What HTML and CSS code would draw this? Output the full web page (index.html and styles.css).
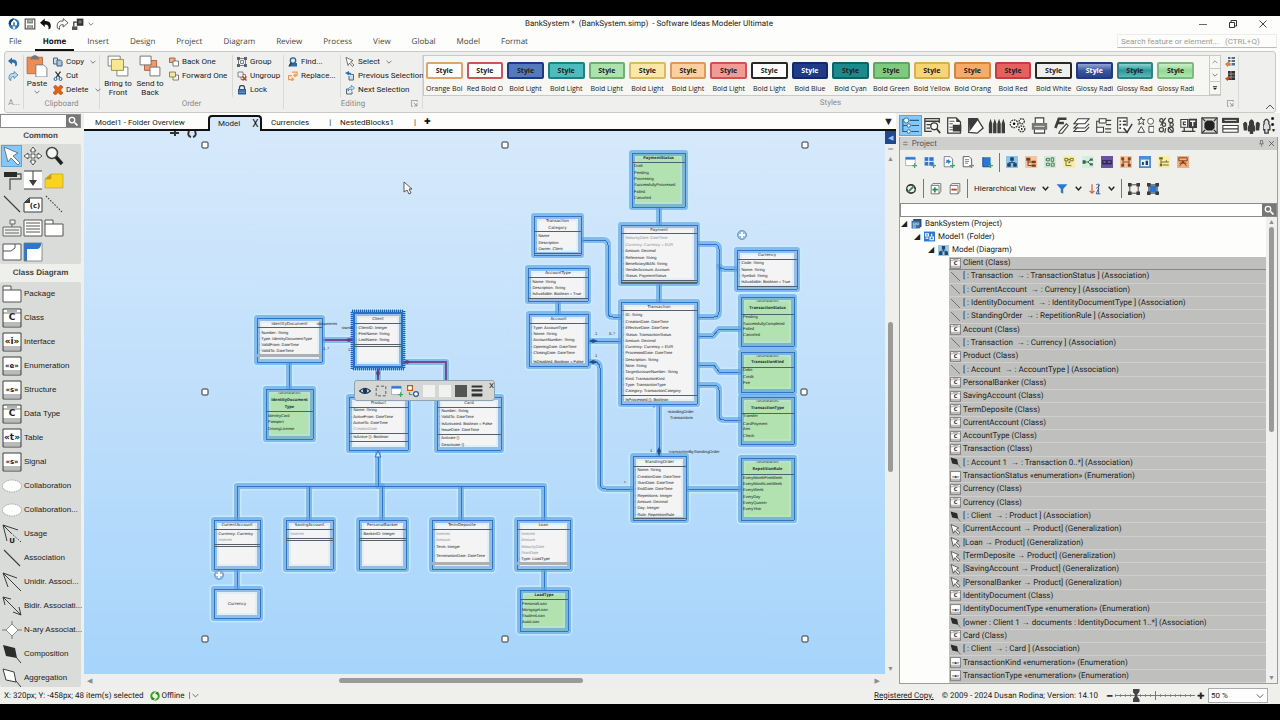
FILE: index.html
```html
<!DOCTYPE html>
<html lang="en">
<head>
<meta charset="utf-8">
<title>BankSystem * (BankSystem.simp) - Software Ideas Modeler Ultimate</title>
<link rel="stylesheet" href="styles.css">
</head>
<body>
<div class="app">
  <header class="titlebar">
    <div class="quick" id="quick"></div>
    <h1 class="title">BankSystem * &nbsp;(BankSystem.simp) &nbsp;- Software Ideas Modeler Ultimate</h1>
    <div class="window-buttons" id="windowButtons"></div>
  </header>
  <div class="menubar">
    <nav class="menu" id="menu"></nav>
    <input class="feature-search" type="text" aria-label="Search feature or element" placeholder="Search feature or element...   (CTRL+Q)">
  </div>
  <section class="ribbon" id="ribbon"></section>
  <main class="workspace">
    <aside class="palette">
      <div class="search"><input type="text" aria-label="Search tools"><button aria-label="Search" data-icon="search"></button></div>
      <h2>Common</h2>
      <div class="tool-grid" id="commonTools"></div>
      <h2 class="second">Class Diagram</h2>
      <div class="tool-list" id="classTools"></div>
    </aside>
    <section class="editor">
      <div class="doc-tabs">
        <button class="doc-tab first">Model1 - Folder Overview</button>
        <button class="doc-tab active">Model <span class="close">X</span></button>
        <button class="doc-tab">Currencies</button><span class="bar">|</span>
        <button class="doc-tab">NestedBlocks1</button><span class="bar">|</span>
        <button class="add" aria-label="New tab">✚</button>
        <button class="tab-menu" aria-label="Tab list">▼</button>
      </div>
      <div class="canvas-row">
        <div class="canvas" id="canvas"></div>
        <div class="vscroll">
          <button class="collapse" aria-label="Collapse">◀</button>
          <span class="split">═</span><span class="arrow">▲</span>
          <span class="track"><span class="thumb"></span></span>
          <span class="arrow">▼</span>
        </div>
      </div>
      <div class="hscroll"><span class="arrow">◀</span><span class="track"><span class="thumb"></span></span><span class="arrow">▶</span></div>
    </section>
    <aside class="side">
      <div class="views" id="views"></div>
      <section class="panel">
        <h2 class="panel-title"><span class="grip">≑</span>Project<span class="pin" data-icon="pin"></span><span class="pin" data-icon="close"></span></h2>
        <div class="toolbar" id="createBar"></div>
        <div class="toolbar second" id="viewBar"></div>
        <div class="search wide"><input type="text" aria-label="Search project"><button aria-label="Search" data-icon="search"></button></div>
        <div class="tree-row">
          <ul class="tree" id="tree"></ul>
          <div class="tree-scroll"><span class="arrow">▲</span><span class="track"><span class="thumb"></span></span><span class="arrow">▼</span></div>
        </div>
      </section>
    </aside>
  </main>
  <footer class="status">
    <span class="position">X: 320px; Y: -458px; 48 item(s) selected</span>
    <span class="offline"><span data-icon="sync"></span>Offline</span>
    <span class="status-more"><span data-icon="chev"></span></span>
    <a class="license" href="#">Registered Copy.</a>
    <span class="copyright">© 2009 - 2024 Dusan Rodina; Version: 14.10</span>
    <button class="zoom-step" aria-label="Zoom out">━</button>
    <input class="zoom" type="range" min="0" max="100" value="24" aria-label="Zoom">
    <button class="zoom-step" aria-label="Zoom in">✚</button>
    <label class="zoom-value"><select aria-label="Zoom level"><option>50 %</option><option>100 %</option></select><span data-icon="chev"></span></label>
  </footer>
</div>
<script src="app.js"></script>
</body>
</html>
```
FILE: styles.css
```css
* { box-sizing: border-box; margin: 0; padding: 0; }
body { background: #000; font: 8px/10px Roboto, "Open Sans", sans-serif; color: #222; text-rendering: geometricPrecision; }
button, input, select { font: inherit; color: inherit; border: 0; background: none; }
button { display: flex; align-items: center; white-space: nowrap; }
ul { list-style: none; }
svg { display: block; flex: none; }
.icon { width: 10px; height: 10px; }
.app { display: flex; flex-direction: column; height: 100vh; border: solid #000; border-width: 16px 0; background: #fdfefb; overflow: hidden; }

.titlebar { display: grid; grid-template-columns: 1fr auto 1fr; align-items: center; height: 16px; }
.quick { display: flex; align-items: center; gap: 4px; padding-left: 8px; }
.quick .icon { width: 12px; height: 12px; }
.title { font-size: 8px; font-weight: 400; padding-left: 18px; }
.window-buttons { display: flex; justify-content: flex-end; gap: 20px; padding-right: 12px; }
.menubar { display: flex; justify-content: space-between; height: 19px; }
.menu { display: flex; gap: 21px; padding-left: 9px; align-items: stretch; font-family: "Open Sans", "Noto Sans", sans-serif; }
.menu a { display: flex; align-items: center; color: #444; text-decoration: none; }
.menu a.on { font-weight: 700; color: #111; border-bottom: 2px solid #111; margin: 0 -8px; padding: 2px 8px 0; }
.feature-search { width: 160px; height: 14px; margin: 2px 3px 0 0; padding-left: 3px; border: 1px solid #ececec; border-bottom-color: #bbb; }
.feature-search::placeholder { color: #9a9a9a; opacity: 1; }

.ribbon { display: flex; height: 62px; margin: 0 4px; border: 1px solid #c9cac7; border-radius: 3px; background: #eff0ed; }
.rgroup { position: relative; display: flex; flex-direction: column; margin: 3px 0; border-right: 1px solid #d9dad7; }
.rgroup.grow { flex: 1; min-width: 0; }
.rgroup .body { display: flex; height: 42px; }
.rgroup .label { text-align: center; color: #8c8c8c; line-height: 13px; }
.rcol { display: flex; flex-direction: column; }
.rcol + .rcol.div { border-left: 1px solid #d9dad7; padding-left: 4px; }
.rcol button { height: 14px; gap: 3px; }
.rcol .chev { width: 6px; height: 6px; margin-left: 3px; }
.big { flex-direction: column; text-align: center; white-space: normal; line-height: 9px; }
.big > .icon { width: 22px; height: 22px; margin-bottom: 2px; }
.big > .icon.chev { width: 6px; height: 8px; }
.launch { position: absolute; right: 4px; bottom: 2px; }
.launch .icon { width: 7px; height: 7px; }
.g-undo { width: 19px; } .g-undo .body { justify-content: center; padding-right: 2px; }
.g-clip { width: 76px; } .g-clip .body { gap: 5px; padding-left: 2px; }
.g-order { width: 184px; } .g-order .body { padding-left: 2px; }
.g-order .big { width: 32px; } .g-order .rcol { width: 66px; padding-left: 3px; } .g-order .rcol.div { width: 50px; }
.g-edit { width: 139px; } .g-edit .rcol { width: 56px; padding-left: 4px; } .g-edit .rcol.div { width: 80px; }
.gallery { flex: 1; display: flex; min-width: 0; border: 1px solid #c9cac7; background: #f6f6f3; font-family: "Open Sans", "Noto Sans", sans-serif; font-size: 7px; }
.gallery .items { flex: 1; display: flex; min-width: 0; padding: 5px 13px 0 0; }
.gallery button.tile { flex: 1 1 0; min-width: 0; display: block; padding: 0 2px; overflow: hidden; text-align: center; }
.swatch { display: block; height: 17px; line-height: 13px; border: 2px solid; border-radius: 2px; font-weight: 700; margin-bottom: 5px; }
.caption { display: block; overflow: hidden; }
.gallery .scroller { width: 11px; display: flex; flex-direction: column; border-left: 1px solid #c9cac7; }
.gallery .scroller button { flex: 1; justify-content: center; border-bottom: 1px solid #c9cac7; }
.gallery .scroller .icon { width: 6px; height: 6px; }
.g-styles .rcol { width: 17px; padding-left: 4px; }
.ribbon-end { display: flex; align-items: flex-end; justify-content: flex-end; width: 36px; }

.workspace { flex: 1; display: flex; min-height: 0; }
.search { display: flex; height: 14px; border: 1px solid #8b8b8b; background: #fff; }
.search input { flex: 1; min-width: 0; }
.search button { width: 14px; justify-content: center; background: #777; color: #fff; }
.palette { width: 84px; padding: 1px 3px 0 0; background: #efefec; font-family: "Liberation Sans", sans-serif; font-size: 8px; display: flex; flex-direction: column; }
.palette h2 { font-size: 8px; line-height: 16px; font-weight: 700; text-align: center; color: #444; }
.palette h2.second { line-height: 18px; }
.tool-grid { display: grid; grid-template-columns: repeat(3, 21px); grid-auto-rows: 24px; padding-left: 1px; background: #dadcd9; border-radius: 2px; }
.tool-grid button { justify-content: center; }
.tool-grid button.on { background: #85c8f8; border: 1px solid #5aa6dc; margin: 1px 0; }
.tool-grid .icon, .tool-list .icon { width: 20px; height: 20px; }
.tool-list { flex: 1; min-height: 0; background: #dadcd9; border-radius: 2px; padding-left: 2px; }
.tool-list button { height: 24px; gap: 2px; }

.editor { flex: 1; min-width: 0; display: flex; flex-direction: column; background: #eeefec; }
.doc-tabs { display: flex; align-items: stretch; height: 18px; padding-top: 2px; background: #fdfefb; border-bottom: 2px solid #111; }
.doc-tab { padding: 2px 9px 0 9px; }
.doc-tab.first { width: 124px; padding-left: 11px; }
.doc-tab.active { gap: 12px; width: 54px; margin-bottom: -2px; border: 2px solid #111; border-bottom: 0; border-radius: 4px 4px 0 0; background: #d6e9fb; padding: 0 0 0 8px; }
.close { font-size: 10px; color: #111; }
.bar { padding: 3px 0 0 11px; }
.add { color: #000; padding-left: 8px; }
.tab-menu { margin-left: auto; font-size: 11px; padding-right: 2px; }
.canvas-row { flex: 1; display: flex; min-height: 0; }
.canvas { position: relative; flex: 1; min-width: 0; overflow: hidden; background: linear-gradient(#d6e9fb, #a6d4fb); }
.canvas > svg { width: 801px; height: 544px; }
.vscroll { width: 11px; display: flex; flex-direction: column; align-items: center; color: #8d8d8d; font-size: 7px; }
.collapse { width: 11px; height: 13px; background: #24478c; color: #9cc4f4; justify-content: center; }
.arrow { font-size: 7px; color: #8d8d8d; }
.track { flex: 1; display: flex; }
.thumb { background: #9a9b99; border-radius: 3px; }
.vscroll .track { flex-direction: column; }
.vscroll .thumb { width: 5px; height: 30%; margin-top: 158px; }
.hscroll { height: 13px; display: flex; align-items: center; padding: 0 16px 0 3px; }
.hscroll .track { margin: 0 10px; }
.hscroll .thumb { width: 32%; height: 5px; margin-left: 31%; }

.floating { position: absolute; left: 270px; top: 249px; width: 141px; height: 21px; display: flex; align-items: center; gap: 4px; padding-left: 4px; background: #d5d7d5; border: 1px solid #8fa3b3; border-radius: 3px; }
.floating .icon { width: 12px; height: 12px; }
.floating .x { position: absolute; right: 0; top: 0; }

.side { width: 384px; padding: 0 2px 0 3px; display: flex; flex-direction: column; background: #efefec; }
.views { display: flex; height: 24px; align-items: center; }
.views button { flex: 20 1 0; height: 21px; justify-content: center; padding: 0; }
.views button.on { background: #85c8f8; border: 1px solid #5aa6dc; }
.views .icon { width: 17px; height: 17px; }
.views button.cut { flex: 8 1 0; overflow: hidden; }
.views .more { width: 7px; font-size: 5px; line-height: 6px; color: #000; }
.panel { flex: 1; min-height: 0; display: flex; flex-direction: column; border: 1px solid #9c9c9c; border-top: 0; margin-bottom: 3px; }
.panel-title { display: flex; align-items: center; gap: 3px; height: 13px; font-size: 8px; font-weight: 400; background: #cecfcc; color: #555; padding: 0 2px; }
.grip { font-size: 8px; color: #888; }
.panel-title .pin[data-icon=pin] { margin-left: auto; }
.panel-title .icon { width: 7px; height: 7px; }
.toolbar { display: flex; align-items: center; height: 24px; padding-left: 5px; gap: 7px; }
.toolbar .icon { width: 12px; height: 12px; }
.toolbar .chev { width: 7px; height: 7px; }
.toolbar .sep { width: 1px; height: 19px; margin: 0 -1px; background: #777; }
.toolbar.second { height: 29px; }
.view-kind { display: flex; align-items: center; }
.view-kind select, .zoom-value select { appearance: none; }
.view-kind select { width: 68px; }
.wide { height: 14px; }
.tree-row { flex: 1; display: flex; min-height: 0; background: #fdfefb; }
.tree { flex: 1; min-width: 0; display: grid; grid-auto-rows: minmax(0, 1fr); }
.tree li { display: flex; align-items: center; gap: 3px; white-space: pre; }
.tree .icon { width: 11px; height: 11px; }
.tree .caret { width: 7px; font-size: 8px; }
.tree .lv0 { padding-left: 1px; } .tree .lv1 { padding-left: 14px; } .tree .lv2 { padding-left: 28px; }
.tree .lv3 { margin-left: 49px; padding-left: 1px; gap: 2px; background: #bfc0bd; border-bottom: 1px solid #cfd0cd; }
.tree .lv3.current { border-color: #888; }
.tree-scroll { width: 11px; display: flex; flex-direction: column; align-items: center; background: #f0f0ee; }
.tree-scroll .thumb { width: 5px; height: 46%; }

.status { position: relative; display: flex; align-items: center; height: 17px; padding: 0 12px 0 4px; background: #efefec; }
.offline { display: flex; align-items: center; gap: 2px; padding: 0 4px 0 6px; }
.status-more { border-left: 1px solid #888; padding-left: 2px; }
.status-more .icon { width: 7px; height: 7px; }
.license { margin-left: auto; color: inherit; }
.copyright { padding: 0 6px 0 8px; }
.zoom-step { justify-content: center; width: 11px; font-size: 9px; }
.zoom { appearance: none; width: 80px; height: 15px; background: linear-gradient(#777, #777) center / 100% 1px no-repeat, linear-gradient(#777, #777) center / 1px 9px no-repeat, repeating-linear-gradient(90deg, #999 0 1px, transparent 1px 5px) center / 100% 3px no-repeat; }
.zoom::-webkit-slider-thumb { appearance: none; width: 7px; height: 13px; background: #444; clip-path: polygon(0 0, 100% 0, 100% 20%, 60% 50%, 100% 80%, 100% 100%, 0 100%, 0 80%, 40% 50%, 0 20%); }
.zoom-value { display: flex; align-items: center; width: 60px; height: 15px; margin-left: 2px; padding-right: 3px; border: 1px solid #aaa; background: #fdfdfd; }
.zoom-value select { flex: 1; padding-left: 2px; }
.zoom-value .icon { width: 8px; height: 8px; }

.halo { fill: none; stroke: #c9ecff; stroke-width: 9; stroke-opacity: .8; stroke-linejoin: round; }
.band { fill: none; stroke: #5d9fe3; stroke-width: 6; stroke-opacity: .65; stroke-linejoin: round; }
.link { fill: none; stroke: #2f77c4; stroke-width: 1; stroke-linejoin: round; shape-rendering: crispEdges; }
.link.owner { stroke: #7b4a8e; stroke-width: 2; }
.card { fill: #f3f4f3; } .card.green { fill: #b2e2b0; }
.inner { fill: none; stroke: #c4e4fb; stroke-opacity: .7; }
.rule { stroke: #55606c; stroke-width: 1; shape-rendering: crispEdges; }
.greybar { fill: #adb0b2; }
.name { font: 4px "DejaVu Sans", sans-serif; text-anchor: middle; fill: #222a33; }
.green .name { font: 700 4px "Open Sans", sans-serif; }
.green .name.kind { font: 3px "DejaVu Sans", sans-serif; }
.attr { font: 4px "Liberation Sans", sans-serif; fill: #14181c; }
.attr.dim { fill: #8c9196; }
.mark { fill: #1c4f8c; }
.mark.owner { fill: #6b3a7c; }
.handle { fill: #fff; stroke: #333; stroke-width: 1; }
```
FILE: app.js
```javascript
const D = '#3c3c3c', B = '#2b78d0';
const S = (d, c = D, w = 1.5, f = 'none') => `<path d="${d}" fill="${f}" stroke="${c}" stroke-width="${w}"/>`;
const F = (d, c = D) => `<path d="${d}" fill="${c}"/>`;
const T = (x, y, s, t) => `<text x="${x}" y="${y}" font-size="${s}" font-weight="700" text-anchor="middle" font-family="DejaVu Sans, sans-serif" fill="#222">${t}</text>`;
const classBox = (t, s) => S('M1 1H19V19H1Z', D, 1, '#fff') + S('M1 15H19M1 17H19', D, .7) + T(10, 12, s, t);
const plus = S('M16 12V20M12 16H20', '#3aa76d', 2);
const undoPath = 'M0 8L8 1V5Q19 4 18 15Q18 18 14 19Q16 11 8 11V15Z';
const nodes = (bg, c) => F('M0 0H20V20H0Z', bg) + S('M10 7V11M5 14V11H15V14', c, 1.5) + F('M7 2H13V8H7ZM2 12H8V18H2ZM12 12H18V18H12Z', c);
const frame = S('M3 3H17V17H3Z', D, 1.5) + F('M0 0H6V6H0ZM14 0H20V6H14ZM0 14H6V20H0ZM14 14H20V20H14Z', D);

const icons = {
  logo: '<circle cx="10" cy="10" r="9" fill="#2774c2"/>' + F('M2 5Q5 0 10 1V9L6 13L1 9Z', '#123c6b') + F('M10 2L15 7V12H12V18H8V12H5V8Z', '#fff') + F('M9 7H11V14H9Z', '#123c6b'),
  save: S('M2 2H18V18H2Z', '#555', 2) + F('M5 2H15V9H5ZM5 12H15V18H5Z', '#888') + S('M7 5H13M7 15H13', '#fff', 1),
  undoK: F(undoPath, '#111'), undo: F(undoPath, '#2b6fae'),
  redoK: `<g transform="matrix(-1 0 0 1 20 0)">${S(undoPath, '#333', 1.3)}</g>`,
  redo: `<g transform="matrix(-1 0 0 1 20 0)">${S(undoPath, '#3579ad', 1.5, '#bcdcf0')}</g>`,
  shapes: F('M8 1H19V13H8Z', '#333') + F('M0 14H9V20H0Z', '#555') + S('M3 14V7H8', '#333', 2) + F('M11 4H16V9H11Z', '#777'),
  chev: S('M2 6L10 14L18 6', '#333', 2), chevUp: S('M2 14L10 6L18 14', '#555', 2),
  chevB: S('M2 5L10 14L18 5', '#222', 4),
  menuDown: F('M3 4H17V7H3ZM3 9H17L10 17Z', '#222'),
  min: S('M2 11H18', '#333', 1.5), max: S('M3 7H13V17H3ZM6 7V3H17V14H13', '#333', 2),
  close: S('M3 3L17 17M17 3L3 17', '#444', 2),
  pin: S('M6 1H14M7 1V11M13 1V11M3 11H17M10 11V19', '#666', 2),
  launch: S('M18 5V1H1V18H5', '#777', 2) + S('M8 8L16 16M17 9V17H9', '#777', 2),
  search: S('M13 13L19 19', '#fff', 3.5) + '<circle cx="8" cy="8" r="5.5" fill="none" stroke="#fff" stroke-width="2.5"/>',
  paste: F('M1 2H15V17H1Z', '#ee8b57') + S('M1 2H15V17H1Z', '#a4603c', .7) + F('M4 4Q4 1 8 0Q12 1 12 4Z', '#777') + S('M9 9H16L19 12V20H9Z', '#777', .8, '#fff'),
  copy: S('M1 2H9V14H1Z', '#4b6577', 2, '#cddbe4') + S('M8 6H15L18 9V18H8Z', '#3c5f80', 2, '#a9c4dc'),
  cut: S('M5 1L14 13M15 1L6 13', '#333', 2.5) + '<circle cx="5" cy="16" r="3" fill="none" stroke="#2463a8" stroke-width="2"/><circle cx="15" cy="16" r="3" fill="none" stroke="#2463a8" stroke-width="2"/>',
  del: F('M1 4L5 0L10 5L15 0L20 4L15 10L20 16L15 20L10 15L5 20L0 16L5 10Z', '#e36216') + S('M1 4L5 0L10 5L15 0L20 4L15 10L20 16L15 20L10 15L5 20L0 16L5 10Z', '#9b3b08', 1),
  front: S('M1 1H12V10H1Z', '#777', .8, '#fff') + S('M9 11H19V19H9Z', '#777', .8, '#fff') + S('M4 4H15V14H4Z', '#8b8b46', .8, '#f6e88f'),
  back: S('M5 5H16V14H5Z', '#a4603c', .8, '#ee9a6b') + S('M1 1H11V9H1Z', '#666', .8, '#fff') + S('M10 11H19V19H10Z', '#666', .8, '#fff'),
  backOne: S('M1 2H12V11H1Z', '#7c4c32', 1.5, '#f4b18b') + S('M8 8H19V18H8Z', '#555', 1.5, '#fff'),
  forwardOne: S('M8 8H19V18H8Z', '#555', 1.5, '#fff') + S('M1 2H13V12H1Z', '#666', 1.5, '#f6e88f'),
  group: S('M3 3H17V17H3Z', '#556', 1.5) + F('M0 0H6V6H0ZM14 0H20V6H14ZM0 14H6V20H0ZM14 14H20V20H14Z', '#567') + S('M7 7H13V13H7Z', '#567', 1.5),
  ungroup: S('M2 2H12V12H2ZM8 12V17H17V7H12', '#666', 1.5) + S('M11 11L19 19M19 11L11 19', '#d0401b', 3),
  lock: S('M5 9V5Q5 1 10 1Q15 1 15 5V9', '#345', 2.5) + F('M2 8H18V19H2Z', '#2c5f98') + S('M4 12H16M4 15H16', '#9fc3e4', 1),
  find: F('M4 12H18V19H4Z', '#2d6aa8') + '<circle cx="10" cy="7" r="5.5" fill="#d6ebfa" stroke="#2d5f92" stroke-width="2.5"/>' + S('M6 12L2 19', '#333', 3),
  replace: S('M8 2H18V9H12M15 5L12 9L15 12', '#ee9a55', 2.5) + S('M8 9H1V17H10M7 13L11 17L7 20', '#ee9a55', 2.5),
  arrow: S('M2 1L6 17L9 12L15 19L18 16L11 10L16 7Z', '#333', 1.3, '#fff'),
  prevSel: F('M0 4L8 0V3Q14 3 14 10Q10 6 8 7V9Z', '#2b6fae') + S('M8 10V18H17V7H13', '#567', 2, '#cddbe4'),
  nextSel: S('M8 8H3V18H14V13', '#567', 2, '#e4eaee') + S('M6 12Q7 3 13 4V1L19 6L13 11V8Q9 8 6 12', '#2b6fae', 1.3, '#cde4f5'),
  styleA: F('M6 0H20V4H6ZM6 6H20V10H6ZM6 12H20V17H6Z', '#556e88') + S('M12 0V17', '#fff', 2) + F('M0 14L8 8L10 14L5 20Z', '#e0813c'),
  styleB: F('M6 0H20V18H6Z', '#333') + S('M12 0V17M6 6H20M6 12H20', '#bbb', 1.3) + F('M0 15L8 10L10 14L5 20Z', '#c74e22'),
  sync: '<circle cx="10" cy="10" r="7.5" fill="none" stroke="#35a51c" stroke-width="4"/>' + S('M8 5L13 1M12 15L7 19', '#fff', 2) + F('M10 4L17 2L16 9ZM10 16L3 18L4 11Z', '#2b8a18'),
  pointer: S('M2 1L6 16L9 12L16 19L18 17L11 10L16 7Z', '#777', 1, '#fff'),
  move: S('M10 1L13 5H11V9H15V7L19 10L15 13V11H11V15H13L10 19L7 15H9V11H5V13L1 10L5 7V9H9V5H7Z', '#555', 1, '#fff'),
  zoomTool: '<circle cx="8" cy="7" r="5.5" fill="#f5f5f5" stroke="#444" stroke-width="1.5"/>' + S('M12 11L18 18', '#222', 3.5),
  roller: F('M2 2H15V7H2Z', '#2a2a2a') + S('M15 4H19V9H8V20', '#555', 1.3),
  insert: F('M1 1H19V19H1Z', '#fff') + S('M1 1H19M1 19H19M10 1V12', D, 1) + F('M6 10H14L10 16Z'),
  note: F('M7 4H19V18H1V9Z', '#fbd31c') + F('M1 9L7 4V9Z', '#c79a10') + S('M7 4H19V18H1V9ZM7 4V9H1', '#b9982a', .6),
  line: S('M2 2L18 18', D, 1.1), dash: S('M2 2L18 18', D, 1.1).replace('/>', ' stroke-dasharray="1.5 1.5"/>'),
  comment: S('M6 4H19V18H1V9Z', D, 1, '#fff') + F('M1 9L7 4V9Z') + T(12, 14, 7, '(c)'),
  stamp: S('M8 2H13V6H8ZM10 6V9M1 9H19V18H1ZM3 12H17M3 15H17', '#666', 1, '#eee'),
  list: S('M1 2H19V18H1Z', '#555', 1, '#fff') + S('M3 5H17M3 8H17M3 11H17M3 14H17', '#555', 1),
  pack: S('M1 6H19V18H1ZM1 6V2H9V6', '#555', 1, '#fff'),
  pageA: S('M1 2H19V18H1Z', '#555', 1, '#fff') + S('M1 9H9L13 6V2', '#555', 1),
  frameT: F('M1 1H19V19H1Z', '#fff') + F('M1 1H18V3Q17 7 14 7H4V19H1Z', B) + S('M1 1H19V19H1Z', '#777', .8),
  cls: classBox('C', 9) + S('M1 5H19', D, .7) + S('M5 3H15', '#999', 1.5), iface: classBox('«i»', 9), enumr: classBox('«e»', 7), struct: classBox('«s»', 7), tabl: classBox('«t»', 9),
  ellipse: '<ellipse cx="10" cy="10" rx="9.5" ry="6" fill="#fff" stroke="#999" stroke-width=".8" stroke-dasharray="1.5 .8"/>',
  usage: S('M1 1L5 17M1 1L16 6M1 1L9 9', D, 1) + S('M9 9L19 18', D, 1).replace('/>', ' stroke-dasharray="1.5 1.5"/>') + T(10, 19, 7, 'U'),
  uni: S('M1 1L19 19M1 1L6 15M1 1L15 6', D, 1), bidi: S('M1 1L19 19M1 1L3 9M1 1L9 3M19 19L17 11M19 19L11 16', D, 1),
  nary: S('M0 10H20M10 1V19', '#777', 1) + S('M10 4L16 10L10 16L4 10Z', '#777', .8, '#fff'),
  comp: F('M1 1L13 4L15 14L4 12Z', '#2c2c2c') + S('M14 13L19 19', D, 1), aggr: S('M1 1L12 4L14 14L4 12Z', D, 1, '#fff') + S('M14 13L19 19', D, 1),
  vTree: S('M4 3H1V17H6M1 10H6M9 4H20M11 10H20M11 17H20', '#275f86', 1.3) + '<circle cx="5" cy="4" r="3" fill="#e6f5ff" stroke="#275f86"/><circle cx="8" cy="10" r="2" fill="#fff" stroke="#275f86"/><circle cx="8" cy="17" r="2" fill="#fff" stroke="#275f86"/>',
  vFind: S('M18 7V2H1V17H9M1 5H18M3 9H8M3 13H7', D, 1.5) + '<circle cx="12" cy="11" r="4" fill="#fff" stroke="#3c3c3c" stroke-width="1.5"/>' + S('M15 14L19 19', D, 2),
  vDoc: S('M2 1H12L17 6V19H2Z', D, 1.5, '#fff') + F('M12 1V6H17ZM8 9H18V17H8Z') + S('M4 5H10M4 8H8M4 12H8M4 15H8', D, 1),
  vPaint: S('M2 2H12L19 13L12 19L2 18Z', D, 1.5, '#fff') + F('M2 2H14L3 17Z'),
  vPencils: F('M1 8L3 2L5 8V19H1ZM6 8L8 2L10 8V19H6ZM11 8L13 2L15 8V19H11ZM16 8L18 2L20 8V19H16Z'),
  vGears: '<g fill="#fff" stroke="#444" stroke-width="1.7" stroke-dasharray="2 .9"><circle cx="6" cy="8" r="4.5"/><circle cx="15" cy="5" r="3"/><circle cx="15" cy="14" r="3.5"/></g><circle cx="6" cy="8" r="1.5"/><circle cx="15" cy="14" r="1"/>',
  vPrint: S('M5 8V1H15V8M4 13V19H16V13', D, 1.3, '#fff') + F('M1 7H19V15H1Z', '#777') + S('M4 11H16M6 16H14', '#eee', 1),
  vFont: S('M4 13L8 2H17M6 7H14', D, 3) + S('M9 17L17 8L19 10L12 19L8 19Z', D, 1.2, '#fff'),
  vLayers: S('M6 12L1 17H14L19 12M6 8L1 13H14L19 8M6 2H19L14 8H1Z', D, 1.3, '#fff'),
  vFlow: S('M5 2H13V7H5ZM2 12H10V18H2ZM13 4H19M13 9H19M12 14H19M12 18H19M2 12V5H5', D, 1.3, '#fff'),
  vCheck: S('M2 1H13V18H2Z', D, 1.3, '#fff') + S('M4 5H6M8 5H12M4 9H6M8 9H12M4 13H6', D, 2) + S('M9 13L13 18L19 8', D, 1.8, '#fff'),
  vShapes: S('M5 0L6 3H9L7 5L8 9L5 7L2 9L3 5L1 3H4ZM14 11H20V18H14ZM5 11L9 18H1Z', D, 1.1, '#fff') + '<circle cx="16" cy="5" r="3.5" fill="#fff" stroke="#444"/>',
  vPct: '<g fill="none" stroke="#444" stroke-width="1.5"><circle cx="4" cy="4" r="2"/><circle cx="15" cy="4" r="2.5"/><circle cx="7" cy="9" r="2"/><circle cx="16" cy="9" r="2"/><circle cx="4" cy="15" r="2.5"/><circle cx="15" cy="15" r="3"/></g>' + S('M9 1L3 10M9 13L8 19M12 12L18 18', D, 1.3),
  vCT: S('M1 3H9V12H1Z', D, 1.3, '#fff') + F('M10 2H20V13H10Z') + S('M12 5H18M15 5V11', '#fff', 1.5) + S('M7 6H4V9H7', D, 1.5) + S('M2 17H18M5 12V17M15 12V17', D, 1.5),
  vChip: S('M1 1H19V19H1Z', D, 1.3, '#ddd') + S('M1 1L5 5M19 1L15 5M1 19L5 15M19 19L15 15', D, 1.5) + F('M7 4H13L16 7V13L13 16H7L4 13V7Z', '#222'),
  vRows: F('M0 1H20V7H0Z') + S('M1 10H19V18H1ZM1 14H19', D, 1.3, '#fff') + S('M3 4H17', '#fff', 1),
  people: F('M7 6Q10 -1 13 6V9Q15 11 14 17H12V20H8V17H6Q5 11 7 9ZM0 8Q3 3 5 8V16H1ZM20 8Q17 3 15 8V16H19Z'),
  person: S('M7 6Q10 -1 13 6Q12 8 14 10V15H12V19H8V15H6V10Q8 8 7 6Z', D, 1.5, '#ddd'),
  newDiag: S('M1 2H17V16H1Z', '#888', 1, '#fff') + F('M1 2H17V6H1Z', B) + plus,
  newFold: F('M1 2H16V16H1Z', B) + S('M1 9H16M8 2V16', '#fff', 1.5) + plus,
  newStar: S('M2 1H12L16 5V18H2Z', '#667', 1.3, '#fff') + F('M9 5L11 8L14 9L11 11L10 14L8 11L4 12L6 9L5 6L8 7Z', B) + plus,
  newDoc: S('M2 1H12L16 5V18H2Z', '#556', 1.5, '#fff') + S('M5 6H12M5 9H12M5 12H10', '#667', 1.3) + plus,
  newBook: F('M3 2H16V18H3Z', B) + S('M3 2V18H15', '#15477f', 1.5) + plus,
  refresh: '<circle cx="10" cy="10" r="7" fill="none" stroke="#333" stroke-width="3"/>' + S('M5 15L15 5', '#3a8d52', 3) + S('M3 10L7 5M17 10L13 15', '#fff', 1),
  expand: S('M2 4H15V18H2ZM2 4L5 1H18V14L15 18', '#555', 1.3, '#fff') + S('M8 7V16M4 11H13', '#2e8d4e', 3),
  collapse: S('M2 4H15V18H2ZM2 4L5 1H18V14L15 18', '#555', 1.3, '#fff') + S('M4 11H13', '#bb3d22', 3),
  filter: F('M1 2H19L12 10V18L8 16V10Z', B), sort: S('M5 2V17M1 13L5 17L9 13', '#d3622c', 2) + S('M12 18L16 9M16 3V18M12 3Q18 0 17 5L12 9M12 18H19', '#37598a', 1.6),
  selA: frame, selB: F('M4 4H16V16H4Z', B) + frame,
  project: F('M4 2H19V15L16 18H4Z', '#2c4f73') + F('M1 5H16V19H1Z', '#3a6da0') + S('M4 9H8V12H4ZM10 9H14V12H10ZM4 14H8V17H4Z', '#c3defa', 1.3),
  folder: F('M0 1H20V19H0Z', B) + S('M3 5H8V9H3ZM11 11H17V16H11ZM3 13H8M14 5V9', '#fff', 2),
  diagram: nodes('#9dc8e8', '#1f4767'),
  eye: S('M1 10Q10 1 19 10Q10 18 1 10Z', '#16365a', 2, '#fff') + '<circle cx="10" cy="10" r="4" fill="#16365a"/>',
  marquee: S('M2 2H18V18H2Z', '#555', 1.5).replace('/>', ' stroke-dasharray="5 3"/>'),
  reshape: S('M1 1H9V9H1Z', '#b85b1d', 2, '#fff') + S('M4 12V16H9', '#2b8a58', 1.5) + '<circle cx="15" cy="15" r="4" fill="#fff" stroke="#205c9c" stroke-width="2"/>',
  white: F('M0 0H20V20H0Z', '#f0f1f0'), dark: F('M0 0H20V20H0Z', '#555'), lines: F('M1 1H19V4H1ZM1 7H19V11H1ZM1 14H19V19H1Z', '#333')
};
const tint = (bg, c, fill, line) => F('M0 0H20V20H0Z', bg) + S(line, c, 1.6) + F(fill, c);
icons.k0 = nodes('#8ec3ea', '#1b4465');
icons.k1 = tint('#f2c6a0', '#7c3a16', 'M2 3H9V8H2ZM11 8H18V12H11ZM11 14H18V18H11Z', 'M5 8V16H11M5 10H11');
icons.k2 = tint('#cfead7', '#487a59', 'M3 5H5V7H3Z', 'M4 4H9V8H4ZM4 12H9V16H4ZM12 3H16V9H12ZM12 12H17V17H12Z');
icons.k3 = tint('#f6edaa', '#77702c', 'M9 9H12V12H9Z', 'M3 4H8V8H3ZM12 4H17V8H12ZM5 8V16H14M8 6H12');
icons.k4 = tint('#d2efdf', '#39654f', 'M1 7H6V13H1ZM13 4H18V8H13ZM13 12H18V16H13Z', 'M5 10H10L14 6M10 10L14 14');
icons.k5 = F('M0 0H20V20H0Z', '#6a54a0') + F('M2 7H18V14H2Z', '#2f2254') + S('M4 10H8M11 10H16', '#a597cb', 2);
icons.k6 = tint('#f1c4a1', '#8a451c', 'M2 2H7V7H2ZM13 2H18V7H13ZM2 13H7V18H2ZM13 13H18V18H13Z', 'M5 6V14M15 6V14M5 10H15');
icons.k7 = F('M0 0H20V20H0Z', '#4b8fd2') + F('M3 6H17V17H3Z', '#e6f0f8') + F('M5 10H8V15H5ZM11 8H15V15H11Z', '#1c3f6c');
icons.k8 = tint('#f7eda5', '#73692f', 'M2 2H8V6H2ZM3 13H7V17H3Z', 'M5 6V14M5 10H18M14 7V10M8 15H18');
icons.k9 = tint('#edb083', '#8d3d18', 'M8 8H12V12H8Z', 'M3 3H17V8H3ZM4 17L10 9L16 17M4 12H16');

const icon = (n, c = '') => `<svg class="icon ${c}" viewBox="0 0 20 20" aria-hidden="true">${icons[n]}</svg>`;
const byId = id => document.getElementById(id);
document.querySelectorAll('[data-icon]').forEach(e => e.innerHTML = icon(e.dataset.icon));
const btn = (n, t = '', more = '') => `<button${t ? '' : ` aria-label="${n}"`}>${n ? icon(n) : ''}${t}${more}</button>`;
const drop = icon('chev', 'chev');

byId('quick').innerHTML = btn('logo') + btn('save') + btn('undoK') + btn('redoK') + btn('shapes') + drop.replace('icon chev', 'chev" width="6');
byId('windowButtons').innerHTML = ['min', 'max', 'close'].map(n => btn(n)).join('');
byId('menu').innerHTML = 'File Home Insert Design Project Diagram Review Process View Global Model Format'.split(' ').map(t => `<a href="#"${t === 'Home' ? ' class="on"' : ''}>${t}</a>`).join('');

const group = (cls, label, body, launch) => `<div class="rgroup ${cls}"><div class="body">${body}</div><div class="label">${label}</div>${launch ? `<button class="launch" aria-label="More">${icon('launch')}</button>` : ''}</div>`;
const col = (html, cls = '') => `<div class="rcol ${cls}">${html}</div>`;
const big = (n, t, m = '') => `<button class="big">${icon(n)}${t}${m}</button>`;
const tiles = [['Orange Bol', '#fff', '#dca56c'], ['Red Bold O', '#fff', '#cc5555'], ['Bold Light', '#5479bd', '#1c3982'], ['Bold Light', '#4dbcbe', '#207f82'], ['Bold Light', '#ace2ad', '#6cb26e'], ['Bold Light', '#fbe7a7', '#d9bb66'], ['Bold Light', '#fbcf9f', '#dc9b5e'], ['Bold Light', '#f49a95', '#d05353'], ['Bold Light', '#fff', '#282828'], ['Bold Blue', '#203b88', '#12296c', 1], ['Bold Cyan', '#198b8d', '#0e6366'], ['Bold Green', '#7ecb7e', '#5da85e'], ['Bold Yellow', '#f8d475', '#d6b051'], ['Bold Orang', '#f6ac68', '#d28642'], ['Bold Red', '#e95f5d', '#c13f42'], ['Bold White', '#efefee', '#282828'], ['Glossy Radi', 'linear-gradient(#93a6d4,#3b56a2 50%,#29438f)', '#20397f', 1], ['Glossy Radi', 'linear-gradient(#8bd2d1,#27999a 50%,#5bbab9)', '#318083'], ['Glossy Radi', 'linear-gradient(#c8efc7,#93d894 50%,#aee7ad)', '#7fba80']];
byId('ribbon').innerHTML =
  group('g-undo', 'A...', col(btn('undo') + btn('redo'))) +
  group('g-clip', 'Clipboard', big('paste', 'Paste', drop) + col(btn('copy', 'Copy', drop) + btn('cut', 'Cut') + btn('del', 'Delete', drop))) +
  group('g-order', 'Order', big('front', 'Bring to Front') + big('back', 'Send to Back') + col(btn('backOne', 'Back One') + btn('forwardOne', 'Forward One')) + col(btn('group', 'Group') + btn('ungroup', 'Ungroup') + btn('lock', 'Lock'), 'div')) +
  group('g-edit', 'Editing', col(btn('find', 'Find...') + btn('replace', 'Replace...')) + col(btn('arrow', 'Select', drop) + btn('prevSel', 'Previous Selection') + btn('nextSel', 'Next Selection'), 'div'), 1) +
  group('g-styles grow', 'Styles', `<div class="gallery"><div class="items">${tiles.map(([t, bg, b, w]) => `<button class="tile"><span class="swatch" style="background:${bg};border-color:${b};color:${w ? '#fff' : '#222'}">Style</span><span class="caption">${t}</span></button>`).join('')}</div><div class="scroller">${btn('chevUp') + btn('chev') + btn('menuDown')}</div></div>` + col(btn('styleA') + btn('styleB')), 1) +
  `<div class="ribbon-end">${btn('chevUp')}</div>`;

byId('commonTools').innerHTML = 'pointer move zoomTool roller insert note line comment dash stamp list pack pageA frameT'.split(' ').map((n, i) => i ? btn(n) : btn(n).replace('<button', '<button class="on"')).join('');
byId('classTools').innerHTML = [['pack', 'Package'], ['cls', 'Class'], ['iface', 'Interface'], ['enumr', 'Enumeration'], ['struct', 'Structure'], ['cls', 'Data Type'], ['tabl', 'Table'], ['struct', 'Signal'], ['ellipse', 'Collaboration'], ['ellipse', 'Collaboration...'], ['usage', 'Usage'], ['line', 'Association'], ['uni', 'Unidir. Associ...'], ['bidi', 'Bidir. Associati...'], ['nary', 'N-ary Associat...'], ['comp', 'Composition'], ['aggr', 'Aggregation']].map(a => btn(...a)).join('');

byId('views').innerHTML = 'vTree vFind vDoc vPaint vPencils vGears vPrint vFont vLayers vFlow vCheck vShapes vPct vCT vChip vRows people person'.split(' ').map((n, i) => btn(n).replace('<button', `<button class="${i === 0 ? 'on' : i === 17 ? 'cut' : ''}"`)).join('') + '<span class="more">■<br>■<br>▼</span>';
const sep = '<span class="sep"></span>', dropB = icon('chevB', 'chev');
byId('createBar').innerHTML = ['newDiag', 'newFold', 'newStar', 'newDoc', 'newBook'].map(n => btn(n)).join('') + sep + [...Array(10).keys()].map(i => btn('k' + i)).join('');
byId('viewBar').innerHTML = btn('refresh') + sep + btn('expand') + btn('collapse') + sep + `<label class="view-kind"><select aria-label="View"><option>Hierarchical View</option></select>${dropB}</label>` + btn('filter') + dropB + btn('sort') + dropB + sep + btn('selA') + btn('selB');

const rows = [['cls', 'Client (Class)'], ['line', '[ : Transaction  → : TransactionStatus ] (Association)'], ['line', '[ : CurrentAccount  → : Currency ] (Association)'], ['line', '[ : IdentityDocument  → : IdentityDocumentType ] (Association)'], ['line', '[ : StandingOrder  → : RepetitionRule ] (Association)'], ['cls', 'Account (Class)'], ['line', '[ : Transaction  → : Currency ] (Association)'], ['cls', 'Product (Class)'], ['line', '[ : Account  → : AccountType ] (Association)'], ['cls', 'PersonalBanker (Class)'], ['cls', 'SavingAccount (Class)'], ['cls', 'TermDeposite (Class)'], ['cls', 'CurrentAccount (Class)'], ['cls', 'AccountType (Class)'], ['cls', 'Transaction (Class)'], ['comp', '[ : Account 1  → : Transaction 0..*] (Association)'], ['enumr', 'TransactionStatus «enumeration» (Enumeration)'], ['cls', 'Currency (Class)'], ['cls', 'Currency (Class)'], ['comp', '[ : Client  → : Product ] (Association)'], ['arrow', '[CurrentAccount → Product] (Generalization)'], ['arrow', '[Loan → Product] (Generalization)'], ['arrow', '[TermDeposite → Product] (Generalization)'], ['arrow', '[SavingAccount → Product] (Generalization)'], ['arrow', '[PersonalBanker → Product] (Generalization)'], ['cls', 'IdentityDocument (Class)'], ['enumr', 'IdentityDocumentType «enumeration» (Enumeration)'], ['comp', '[owner : Client 1 → documents : IdentityDocument 1..*] (Association)'], ['cls', 'Card (Class)'], ['comp', '[ : Client  → : Card ] (Association)'], ['enumr', 'TransactionKind «enumeration» (Enumeration)'], ['enumr', 'TransactionType «enumeration» (Enumeration)']];
byId('tree').innerHTML = [['project', 'BankSystem (Project)'], ['folder', 'Model1 (Folder)'], ['diagram', 'Model (Diagram)']].map(([n, t], i) => `<li class="lv${i}"><span class="caret">◢</span>${icon(n)}${t}</li>`).join('') + rows.map(([n, t], i) => `<li class="lv3${i ? '' : ' current'}">${icon(n)}${t}</li>`).join('');

/* Class diagram: boxes are [x, y, right, bottom, title lines, title y, divider y, attributes [text, y, dim], rule ys, options] */
const boxes = [
  [257, 318, 322, 362, ['IdentityDocument'], 325, 327, [['Number: String', 334], ['Type: IdentityDocumentType', 340], ['ValidFrom: DateTime', 346], ['ValidTo: DateTime', 352]], [], { grey: 354 }],
  [266, 389, 313, 439, ['IdentityDocument', 'Type'], 401, 411, [['IdentityCard', 417], ['Passport', 423], ['DrivingLicense', 430]], [], { green: 1, e: 394 }],
  [354, 313, 402, 367, ['Client'], 320, 323, [['ClientID: Integer', 329], ['FirstName: String', 335], ['LastName: String', 341]], [344, 346], { main: 1 }],
  [349, 397, 408, 450, ['Product'], 404, 407, [['Name: String', 411], ['ActiveFrom: DateTime', 418], ['ActiveTo: DateTime', 424], ['CreationDate', 430, 1], ['IsActive (): Boolean', 438]], [433, 441], {}],
  [437, 397, 501, 450, ['Card'], 404, 407, [['Number: String', 412], ['ValidTo: DateTime', 418], ['IsActivated: Boolean = False', 425], ['IssueDate: DateTime', 431], ['Activate ()', 439], ['Deactivate ()', 446]], [434], {}],
  [214, 520, 260, 569, ['CurrentAccount'], 526, 529, [['Currency: Currency', 535], ['Interest', 541, 1]], [544, 546], {}],
  [286, 520, 333, 569, ['SavingAccount'], 526, 529, [['Interest', 535, 1]], [538, 540], {}],
  [359, 520, 406, 569, ['PersonalBanker'], 526, 529, [['BankerID: Integer', 535]], [538, 540], {}],
  [432, 520, 492, 569, ['TermDeposite'], 526, 529, [['Interest', 535, 1], ['Amount', 541, 1], ['Term: Integer', 548], ['TerminationDate: DateTime', 557]], [], { grey: 562 }],
  [517, 520, 570, 569, ['Loan'], 526, 529, [['Interest', 535, 1], ['Amount', 541, 1], ['MaturityDate', 548, 1], ['StartDate', 554, 1], ['Type: LoadType', 560]], [], { grey: 562 }],
  [214, 589, 260, 618, ['Currency'], 605, 0, [], [], {}],
  [520, 590, 568, 631, ['LoadType'], 596, 599, [['PersonalLoan', 605], ['MortgageLoan', 611], ['StudentLoan', 617], ['AutoLoan', 623]], [], { green: 1 }],
  [632, 153, 685, 207, ['PaymentStatus'], 159, 162, [['Draft', 167], ['Pending', 174], ['Processing', 180], ['SuccessfullyProcessed', 186], ['Failed', 193], ['Canceled', 199]], [], { green: 1 }],
  [534, 216, 581, 255, ['Transaction', 'Category'], 222, 231, [['Name', 237], ['Description', 244], ['Owner: Client', 250]], [253], {}],
  [621, 225, 697, 283, ['Payment'], 231, 233, [['MaturityDate: DateTime', 239, 1], ['Currency: Currency = EUR', 246, 1], ['Amount: Decimal', 252], ['Reference: String', 259], ['BeneficiaryIBAN: String', 265], ['SenderAccount: Account', 271], ['Status: PaymentStatus', 277]], [280, 282], {}],
  [737, 250, 797, 289, ['Currency'], 256, 259, [['Code: String', 264], ['Name: String', 271], ['Symbol: String', 277], ['IsAvailable: Boolean = True', 283]], [286], {}],
  [528, 268, 588, 301, ['AccountType'], 274, 277, [['Name: String', 283], ['Description: String', 289], ['IsAvailable: Boolean = True', 295]], [298], {}],
  [741, 297, 794, 346, ['TransactionStatus'], 309, 314, [['Pending', 318], ['SuccessfullyCompleted', 325], ['Failed', 330], ['Canceled', 336]], [], { green: 1, e: 302 }],
  [529, 314, 588, 366, ['Account'], 320, 323, [['Type: AccountType', 329], ['Name: String', 335], ['AccountNumber: String', 341], ['OpeningDate: DateTime', 348], ['ClosingDate: DateTime', 354], ['IsDisabled: Boolean = False', 363]], [], {}],
  [621, 302, 697, 404, ['Transaction'], 308, 310, [['ID: String', 316], ['CreationDate: DateTime', 323], ['EffectiveDate: DateTime', 329], ['Status: TransactionStatus', 336], ['Amount: Decimal', 342], ['Currency: Currency = EUR', 348], ['ProcessedDate: DateTime', 354], ['Description: String', 361], ['Note: String', 367], ['TargetAccountNumber: String', 373], ['Kind: TransactionKind', 380], ['Type: TransactionType', 386], ['Category: TransactionCategory', 392], ['IsProcessed (): Boolean', 401]], [395], {}],
  [633, 456, 686, 520, ['StandingOrder'], 463, 466, [['Name: String', 471], ['CreationDate: DateTime', 478], ['StartDate: DateTime', 484], ['EndDate: DateTime', 490], ['Repetitions: Integer', 497], ['Amount: Decimal', 503], ['Day: Integer', 509], ['Rule: RepetitionRule', 516]], [518], {}],
  [741, 352, 794, 392, ['TransactionKind'], 363, 367, [['Debit', 371], ['Credit', 378], ['Fee', 384]], [], { green: 1, e: 357 }],
  [741, 397, 794, 444, ['TransactionType'], 409, 413, [['Transfer', 417], ['CardPayment', 425], ['Atm', 430], ['Check', 437]], [], { green: 1, e: 402 }],
  [741, 458, 794, 520, ['RepetitionRule'], 470, 474, [['EveryMonthFirstWeek', 479], ['EveryMonthLastWeek', 485], ['EveryWeek', 491], ['EveryDay', 498], ['EveryQuarter', 504], ['EveryYear', 510]], [], { green: 1, e: 463 }]
];
const links = ['M289 363V389', 'M378 451V486H382V520', 'M237 520V486H544V520', 'M309 486V520', 'M461 486V520', 'M237 570V589', 'M544 570V590', 'M659 207V225', 'M659 284V302', 'M659 404V456', 'M582 240H603Q608 240 608 245V312Q608 317 613 317H621', 'M697 244H714Q719 244 719 249V264Q719 269 724 269H737', 'M697 317H714Q719 317 719 312V264', 'M697 336H713L719 329H741', 'M697 365H714L719 372H741', 'M697 385H714Q719 385 719 390V415Q719 420 724 420H741', 'M588 341H621', 'M588 362H594Q600 362 600 368V484Q600 489 606 489H633', 'M687 489H741', 'M558 301V314'];
const owned = ['M323 340H354', 'M378 367V397', 'M402 362H446V397'];
const notes = [[316, 325, '-documents'], [341, 329, '-owner'], [323, 350, '1..*'], [348, 351, '1'], [595, 335, '1'], [609, 335, '0..*'], [595, 357, '1'], [667, 413, '-standingOrder'], [670, 419, 'Transactions'], [650, 452, '1'], [653, 409, '*'], [668, 453, '-transactionByStandingOrder'], [624, 484, '*']];
const path = (d, c) => `<path class="${c}" d="${d}"/>`;
const all = [...links, ...owned];
const rect = b => `M${b[0]} ${b[1]}H${b[2]}V${b[3]}H${b[0]}Z`;
let art = all.map(d => path(d, 'halo')).join('') + boxes.map(b => path(rect(b), 'halo')).join('') + all.map(d => path(d, 'band')).join('') + links.map(d => path(d, 'link')).join('') + owned.map(d => path(d, 'link owner')).join('');
for (const b of boxes) {
  const [x, y, r, bt, names, ty, dv, attrs, rules, o] = b, cx = (x + r) / 2;
  art += `<g class="${o.green ? 'green' : ''}">` + path(rect(b), 'card' + (o.green ? ' green' : '')) + path(`M${x + 4} ${y + 4}H${r - 4}V${bt - 4}H${x + 4}Z`, 'inner') + path(rect(b), 'band') + path(rect(b), 'link');
  if (o.main) art += `<path d="M${x - 2} ${y - 2}H${r + 2}V${bt + 2}H${x - 2}Z" fill="none" stroke="#1d62bd" stroke-width="3" stroke-dasharray="1 1"/>` + `<path d="${rect(b)}" fill="none" stroke="#2a70c9" stroke-width="2"/>`;
  if (o.e) art += `<text class="name kind" x="${cx}" y="${o.e}">«enumeration»</text>`;
  if (o.grey) art += path(`M${x} ${o.grey}H${r}V${o.grey + 3}H${x}Z`, 'greybar');
  for (const ry of [dv, ...rules]) if (ry) art += path(`M${x} ${ry}H${r}`, 'rule');
  names.forEach((n, i) => art += `<text class="name" x="${cx}" y="${ty + i * 7}">${n}</text>`);
  for (const [t, ay, dim] of attrs) art += `<text class="attr${dim ? ' dim' : ''}" x="${x + 2}" y="${ay}">${o.green ? '' : '- '}${t}</text>`;
  art += '</g>';
}
art += notes.map(([x, y, t]) => `<text class="attr" x="${x}" y="${y}">${t}</text>`).join('');
art += ['M589 341L593 339L598 341L593 343Z', 'M589 362L593 360L598 362L593 364Z', 'M659 447L661 451L659 456L657 451Z'].map(d => path(d, 'mark')).join('');
art += ['M345 340L349 338L353 340L349 342Z', 'M378 369L380 373L378 378L376 373Z', 'M403 362L407 360L411 362L407 364Z'].map(d => path(d, 'mark owner')).join('');
art += '<path d="M378 451L381 457H375Z" fill="#cfe6fb" stroke="#2f77c4"/>';
art += [[205, 145], [505, 145], [805, 145], [205, 392], [804, 392], [205, 639], [505, 639], [805, 639]].map(([x, y]) => `<rect class="handle" x="${x - 3}" y="${y - 3}" width="6" height="6" rx="1"/>`).join('');
art += [[742, 235], [219, 575]].map(([x, y]) => `<circle cx="${x}" cy="${y}" r="4.5" fill="#8fbdec" stroke="#6d9bcb"/><path d="M${x - 3} ${y}H${x + 3}M${x} ${y - 3}V${y + 3}" stroke="#fff" stroke-width="2"/>`).join('');
art += '<path d="M404 182V192L407 190L409 194L411 193L409 189H412Z" fill="#fff" stroke="#333" stroke-width=".8"/>';
art += '<path d="M170 133H179M175 131V136M189 131Q187 136 191 137M195 131Q197 136 193 137" fill="none" stroke="#333" stroke-width="2"/>';
byId('canvas').innerHTML = `<svg viewBox="84 131 801 544" role="img" aria-label="Class diagram">${art}</svg><div class="floating">${['eye', 'marquee', 'newDiag', 'reshape', 'white', 'white', 'dark', 'lines'].map(n => btn(n)).join('')}<button class="x" aria-label="Close">X</button></div>`;
```
